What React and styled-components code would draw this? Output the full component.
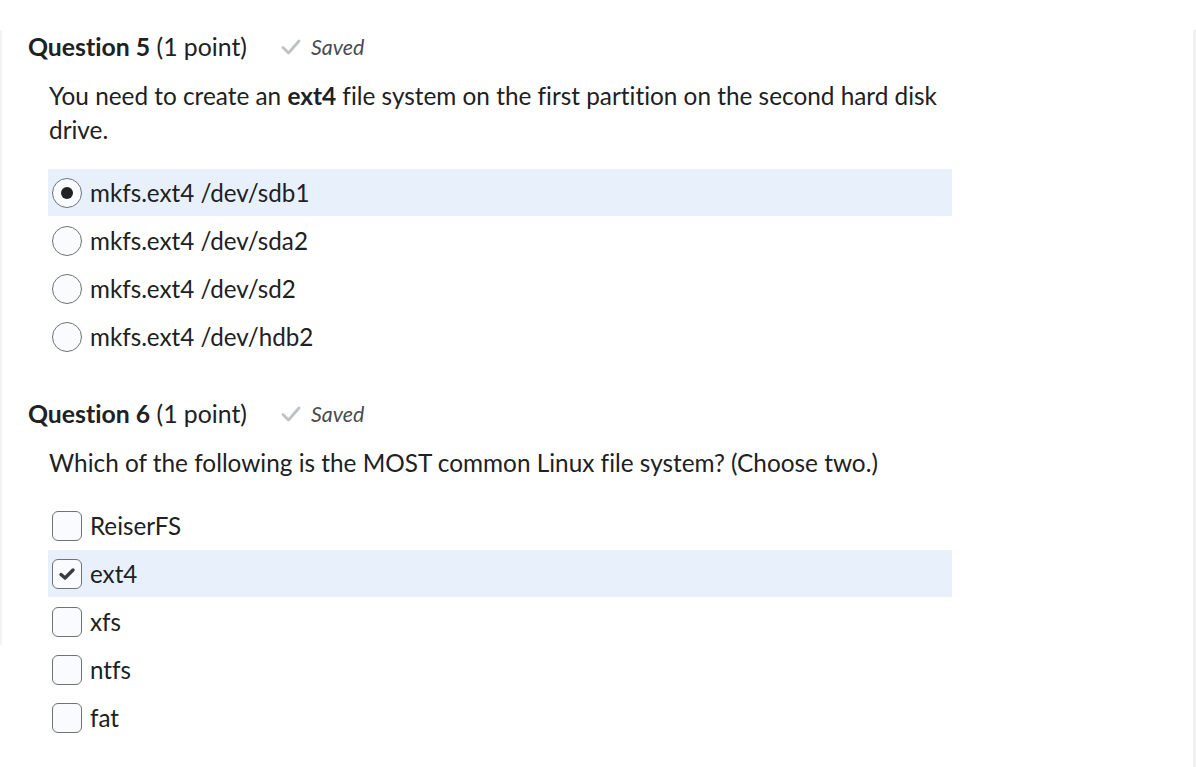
import React, { useState } from "react";
import styled, { createGlobalStyle } from "styled-components";

const GlobalStyle = createGlobalStyle`
  body {
    margin: 0;
    background: #ffffff;
    font-family: Lato, "Noto Sans", sans-serif;
    color: #202122;
    font-variant-ligatures: none;
  }
`;

const questions = [
  {
    id: 5,
    type: "radio",
    text: (
      <>
        You need to create an <b>ext4</b> file system on the first partition on the second hard disk drive.
      </>
    ),
    options: ["mkfs.ext4 /dev/sdb1", "mkfs.ext4 /dev/sda2", "mkfs.ext4 /dev/sd2", "mkfs.ext4 /dev/hdb2"],
    selected: [0],
  },
  {
    id: 6,
    type: "checkbox",
    text: "Which of the following is the MOST common Linux file system? (Choose two.)",
    options: ["ReiserFS", "ext4", "xfs", "ntfs", "fat"],
    selected: [1],
  },
];

const CheckMark = () => (
  <svg width="20" height="16" viewBox="0 0 20 16">
    <polyline points="2,8.5 7.5,14 18,2" fill="none" stroke="#bfc2c5" strokeWidth="2.8" strokeLinecap="round" strokeLinejoin="round" />
  </svg>
);

const Question = ({ q }) => {
  const [sel, setSel] = useState(q.selected);
  const toggle = (i) => {
    if (q.type === "radio") setSel([i]);
    else setSel(sel.includes(i) ? sel.filter((s) => s !== i) : [...sel, i]);
  };
  return (
    <Block>
      <Header>
        <Title>
          <b>Question {q.id}</b> (1 point)
        </Title>
        <Saved>
          <CheckMark />
          <span>Saved</span>
        </Saved>
      </Header>
      <Body>{q.text}</Body>
      <Options>
        {q.options.map((o, i) => {
          const on = sel.includes(i);
          return (
            <Option key={o} $active={on} onClick={() => toggle(i)}>
              {q.type === "radio" ? (
                <Radio $on={on} />
              ) : (
                <Box>
                  {on && (
                    <svg width="18" height="14" viewBox="0 0 18 14">
                      <polyline points="3,7.5 7,11 15,3" fill="none" stroke="#3a3d3f" strokeWidth="3.4" strokeLinecap="round" strokeLinejoin="round" />
                    </svg>
                  )}
                </Box>
              )}
              <span>{o}</span>
            </Option>
          );
        })}
      </Options>
    </Block>
  );
};

const App = () => (
  <>
    <GlobalStyle />
    <Frame>
      {questions.map((q) => (
        <Question key={q.id} q={q} />
      ))}
    </Frame>
  </>
);

const Frame = styled.div`
  margin-top: 30px;
  min-height: 737px;
  box-sizing: border-box;
  padding-left: 28px;
  border-right: 3px solid #f1f1f1;
  background: linear-gradient(#f3f3f3, #f3f3f3) left top / 2px 615px no-repeat;
`;

const Block = styled.section`
  margin-bottom: 37px;
`;

const Header = styled.div`
  display: flex;
  align-items: center;
  height: 34px;
`;

const Title = styled.h2`
  margin: 0;
  font-size: 24.8px;
  font-weight: 400;
  line-height: 34px;
  b {
    font-weight: 700;
  }
`;

const Saved = styled.div`
  display: flex;
  align-items: center;
  gap: 10px;
  margin-left: 34px;
  font-size: 21.4px;
  font-style: italic;
  color: #494c4e;
`;

const Body = styled.p`
  margin: 15px 0 0 21px;
  width: 904px;
  font-size: 24.35px;
  line-height: 34px;
  b {
    font-weight: 700;
  }
`;

const Options = styled.div`
  display: flex;
  flex-direction: column;
  gap: 1px;
  width: 904px;
  margin: 22px 0 0 20px;
`;

const Option = styled.label`
  display: flex;
  align-items: center;
  gap: 8px;
  height: 47px;
  padding-left: 4px;
  font-size: 24.2px;
  cursor: pointer;
  background: ${(p) => (p.$active ? "#e8f1fb" : "transparent")};
`;

const Radio = styled.span`
  position: relative;
  width: 30px;
  height: 30px;
  box-sizing: border-box;
  border-radius: 50%;
  border: 1px solid #6e7376;
  background: #f9fbff;
  flex: none;
  &::after {
    content: "";
    display: ${(p) => (p.$on ? "block" : "none")};
    position: absolute;
    left: 8px;
    top: 8px;
    width: 12px;
    height: 12px;
    border-radius: 50%;
    background: #202122;
  }
`;

const Box = styled.span`
  display: flex;
  align-items: center;
  justify-content: center;
  width: 30px;
  height: 30px;
  box-sizing: border-box;
  border-radius: 6px;
  border: 1px solid #6e7376;
  background: #f9fbff;
  flex: none;
`;

export default App;
